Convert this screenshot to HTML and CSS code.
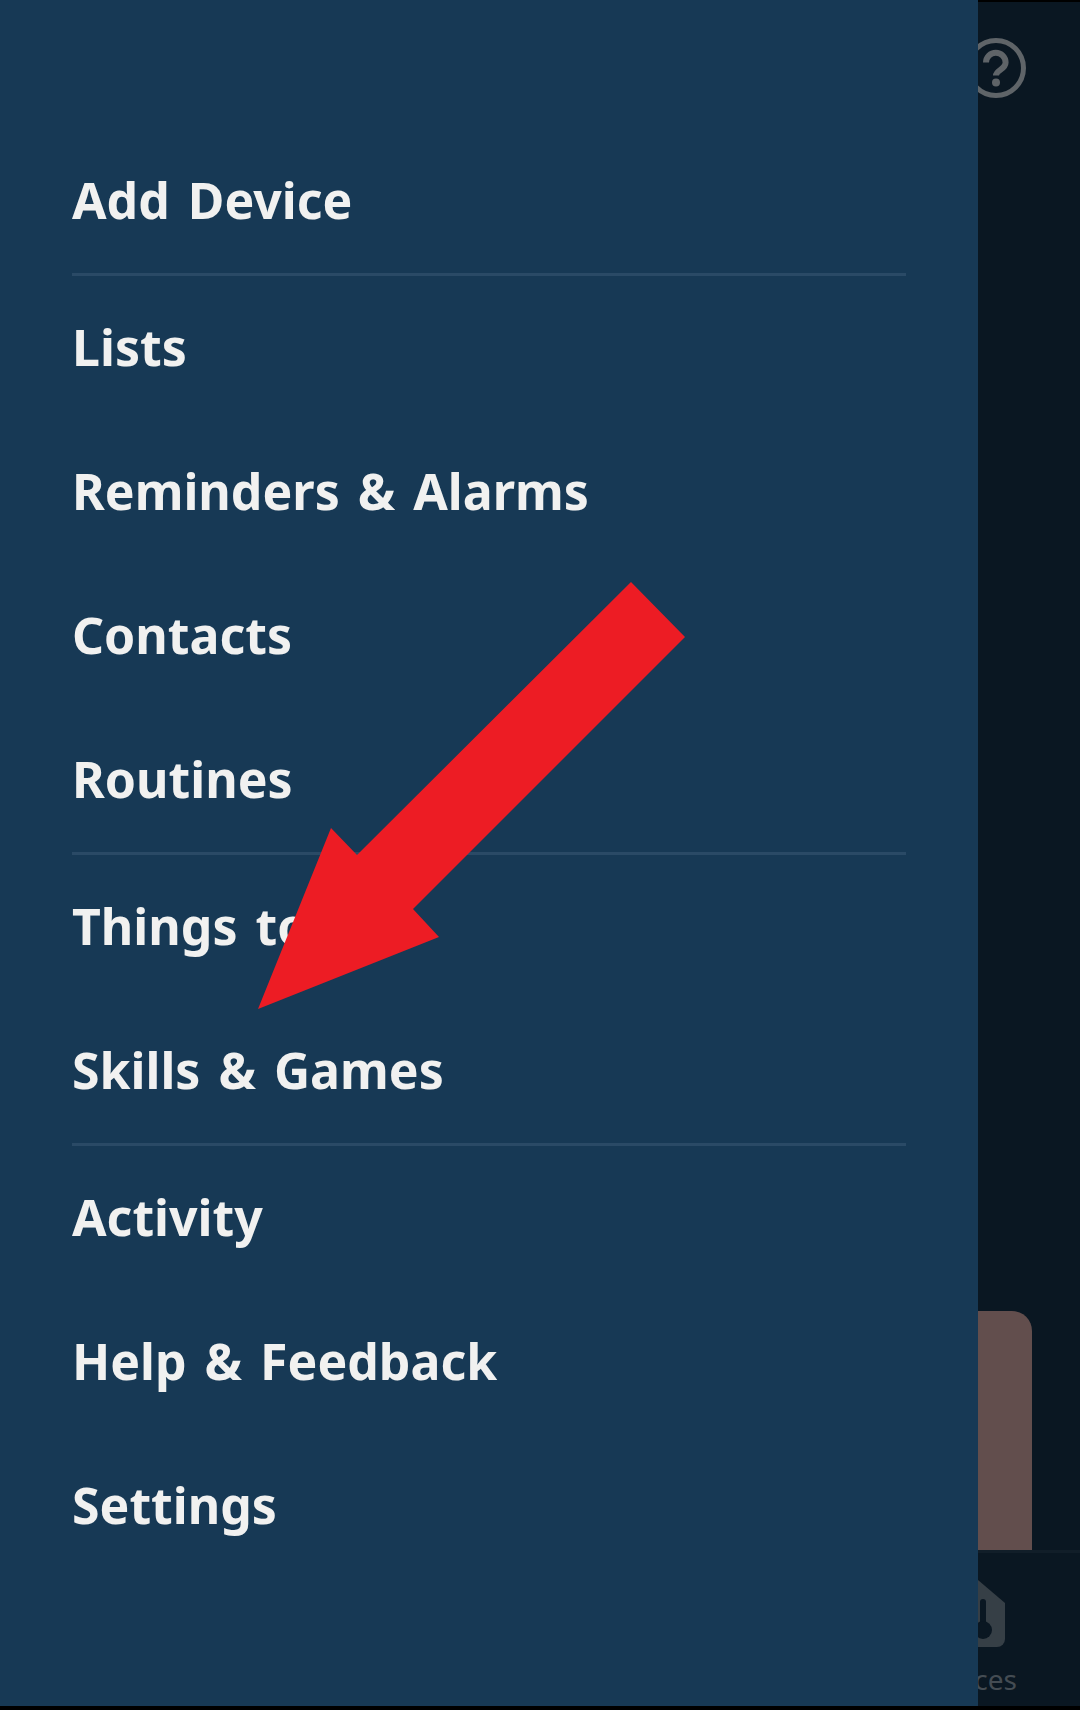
FILE: index.html
```html
<!DOCTYPE html>
<html lang="en">
<head>
  <meta charset="UTF-8" />
  <meta name="viewport" content="width=device-width, initial-scale=1.0"/>
  <title>Menu</title>
  <link rel="stylesheet" href="styles.css">
</head>
<body>
  <div class="screen">
    <div class="page">
      <header class="topbar">
        <svg class="help-icon" viewBox="0 0 60 60" width="60" height="60">
          <circle cx="30" cy="30" r="27.500" fill="none" stroke="#5f6468" stroke-width="5"/>
          <path d="M20 24.500a9.800 9.800 0 0 1 19.600 0c0 7-9.600 7.500-9.600 13" fill="none" stroke="#5f6468" stroke-width="6"/>
          <circle cx="30" cy="44.500" r="4" fill="#5f6468"/>
        </svg>
      </header>
      <main class="feed">
        <div class="card"></div>
      </main>
      <footer class="tabbar">
        <div class="tab">
          <svg class="tab-icon" viewBox="0 0 76 67" width="76" height="67">
            <path d="M8 0H49L76 23V59a8 8 0 0 1-8 8H8a8 8 0 0 1-8-8V8a8 8 0 0 1 8-8z" fill="#363f46"/>
            <rect x="51" y="19" width="6" height="30" rx="3" fill="#0a1722"/>
            <circle cx="54" cy="50" r="9" fill="#0a1722"/>
          </svg>
          <span class="tab-label">Devices</span>
        </div>
      </footer>
    </div>

    <nav class="drawer">
      <ul class="menu-group">
        <li>Add Device</li>
      </ul>
      <ul class="menu-group">
        <li>Lists</li>
        <li>Reminders &amp; Alarms</li>
        <li>Contacts</li>
        <li>Routines</li>
      </ul>
      <ul class="menu-group">
        <li>Things to Try</li>
        <li>Skills &amp; Games</li>
      </ul>
      <ul class="menu-group">
        <li>Activity</li>
        <li>Help &amp; Feedback</li>
        <li>Settings</li>
      </ul>
    </nav>

    <svg class="arrow" viewBox="0 0 1080 1710" width="1080" height="1710">
      <polygon points="631,582 685,637 413,909 439,937 258,1009 331,828 357,855" fill="#ed1c24"/>
    </svg>
  </div>
</body>
</html>
```

FILE: styles.css
```css
:root {
  --drawer-bg: #173955;
  --page-bg: #0a1722;
  --menu-text: #f1f1f0;
  --divider: #2a4a66;
}
* {
  box-sizing: border-box;
}
body {
  margin: 0;
  background-color: #000;
  font-family: "Noto Sans", sans-serif;
}
.screen {
  position: relative;
  width: 1080px;
  height: 1706px;
  overflow: hidden;
}
.page {
  display: flex;
  flex-direction: column;
  height: 100%;
  margin-top: 2px;
  background-color: var(--page-bg);
}
.topbar {
  display: flex;
  justify-content: flex-end;
  padding: 36px 54px 0 0;
}
.feed {
  flex: 1;
  display: flex;
  align-items: flex-end;
  justify-content: flex-end;
  padding-right: 48px;
}
.card {
  width: 400px;
  height: 239px;
  background-color: #624e4d;
  border-radius: 20px 20px 0 0;
}
.tabbar {
  display: flex;
  justify-content: flex-end;
  height: 158px;
  padding: 27px 63px 0 0;
  border-top: 3px solid #111e29;
}
.tab {
  display: flex;
  flex-direction: column;
  align-items: center;
}
.tab-label {
  margin-top: 13px;
  font-size: 28px;
  color: #444c53;
}
.drawer {
  position: absolute;
  top: 0;
  left: 0;
  width: 978px;
  height: 100%;
  padding: 129px 72px 0;
  background-color: var(--drawer-bg);
}
.menu-group {
  margin: 0;
  padding: 4px 0 0;
  list-style: none;
  border-bottom: 3px solid var(--divider);
}
.menu-group:last-child {
  border-bottom: none;
}
.menu-group li {
  height: 144px;
  font-size: 50px;
  font-weight: 700;
  line-height: 134px;
  word-spacing: 5px;
  color: var(--menu-text);
}
.menu-group li:last-child {
  height: 140px;
}
.arrow {
  position: absolute;
  top: 0;
  left: 0;
}
```
